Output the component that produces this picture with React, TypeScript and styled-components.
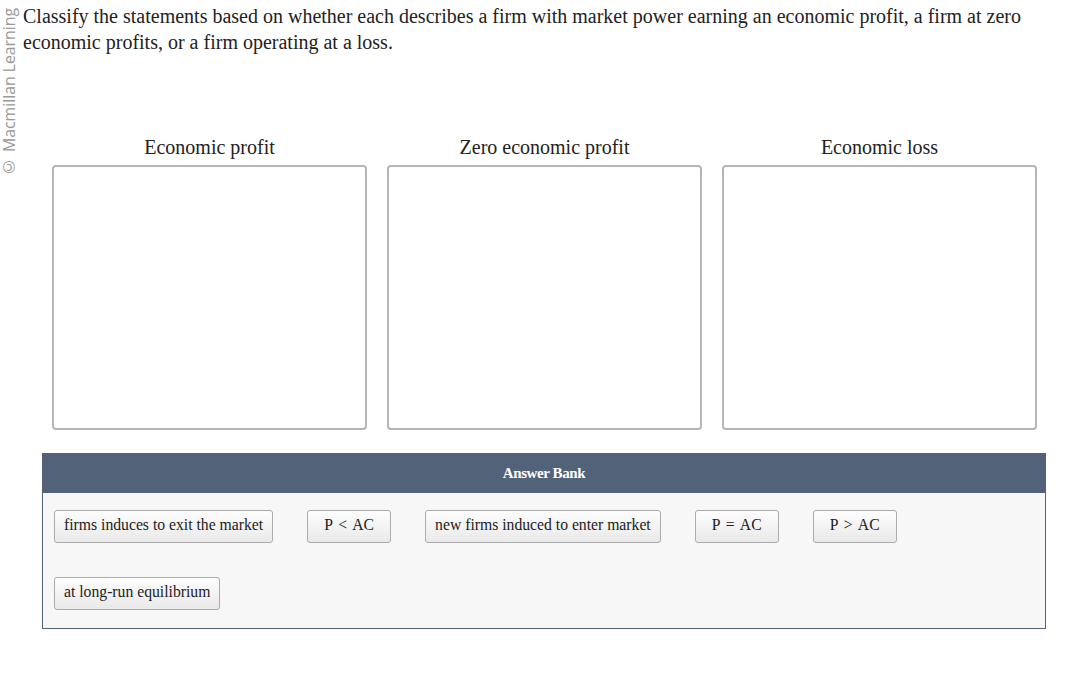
import React, { FC } from 'react';
import styled, { createGlobalStyle } from 'styled-components';

const GlobalStyle = createGlobalStyle`
    html, body {
        margin: 0;
        padding: 0;
        background: #ffffff;
    }
    body {
        font-family: "Liberation Serif", "Times New Roman", serif;
        color: #222;
    }
`;

const Page = styled.div`
    display: flex;
    width: 1072px;
    min-height: 675px;
`;

const Sidebar = styled.div`
    width: 23px;
    flex-shrink: 0;
    display: flex;
    align-items: flex-start;
    padding: 8px 0 0 1px;
    box-sizing: border-box;
`;

const Watermark = styled.span`
    writing-mode: vertical-rl;
    transform: rotate(180deg);
    font-family: "Open Sans", "Liberation Sans", sans-serif;
    font-size: 15.8px;
    line-height: 17px;
    color: #999999;
    white-space: nowrap;
`;

const Main = styled.div`
    flex-grow: 1;
    display: flex;
    flex-direction: column;
    padding-top: 3px;
`;

const Prompt = styled.p`
    margin: 0;
    font-size: 20px;
    line-height: 26px;
    color: #222;
    padding-right: 8px;
`;

const Columns = styled.div`
    display: grid;
    grid-template-columns: repeat(3, 315px);
    gap: 20px;
    margin: 80px 0 0 29px;
`;

const Column = styled.div`
    display: flex;
    flex-direction: column;
    align-items: center;
`;

const Heading = styled.div`
    font-size: 20px;
    line-height: 24px;
    margin-bottom: 6px;
    color: #222;
`;

const DropBox = styled.div`
    width: 100%;
    height: 265px;
    box-sizing: border-box;
    border: 2px solid #b5b5b5;
    border-radius: 4px;
    background: #fff;
`;

const Bank = styled.div`
    margin: 23px 0 0 19px;
    width: 1004px;
    border: 1px solid #526279;
    box-sizing: border-box;
`;

const BankHeader = styled.div`
    height: 39px;
    background: #526279;
    color: #fff;
    font-weight: bold;
    font-size: 15px;
    letter-spacing: -0.4px;
    display: flex;
    align-items: center;
    justify-content: center;
`;

const BankBody = styled.div`
    background: #f7f7f7;
    display: flex;
    flex-wrap: wrap;
    gap: 34px 34px;
    padding: 17px 11px 17px 11px;
    min-height: 135px;
    box-sizing: border-box;
    align-content: flex-start;
`;

const Chip = styled.div`
    height: 33px;
    min-width: 84px;
    box-sizing: border-box;
    padding: 0 9px 3px;
    border: 1px solid #ababab;
    border-radius: 3px;
    background: linear-gradient(to bottom, #fdfdfd 0%, #e9e9e9 100%);
    font-size: 15.7px;
    color: #222;
    display: flex;
    align-items: center;
    justify-content: center;
    white-space: pre;
`;

const categories = ['Economic profit', 'Zero economic profit', 'Economic loss'];

const answers = [
    'firms induces to exit the market',
    'P < AC',
    'new firms induced to enter market',
    'P = AC',
    'P > AC',
    'at long-run equilibrium',
];

const App: FC = () => {
    return (
        <>
            <GlobalStyle />
            <Page>
                <Sidebar>
                    <Watermark>© Macmillan Learning</Watermark>
                </Sidebar>
                <Main>
                    <Prompt>
                        Classify the statements based on whether each describes a firm with market power
                        earning an economic profit, a firm at zero economic profits, or a firm operating at
                        a loss.
                    </Prompt>
                    <Columns>
                        {categories.map(c => (
                            <Column key={c}>
                                <Heading>{c}</Heading>
                                <DropBox />
                            </Column>
                        ))}
                    </Columns>
                    <Bank>
                        <BankHeader>Answer Bank</BankHeader>
                        <BankBody>
                            {answers.map(a => (
                                <Chip key={a}>{a.replace(/ ([<=>]) /, '\u2004$1\u2004')}</Chip>
                            ))}
                        </BankBody>
                    </Bank>
                </Main>
            </Page>
        </>
    );
};

export default App;
